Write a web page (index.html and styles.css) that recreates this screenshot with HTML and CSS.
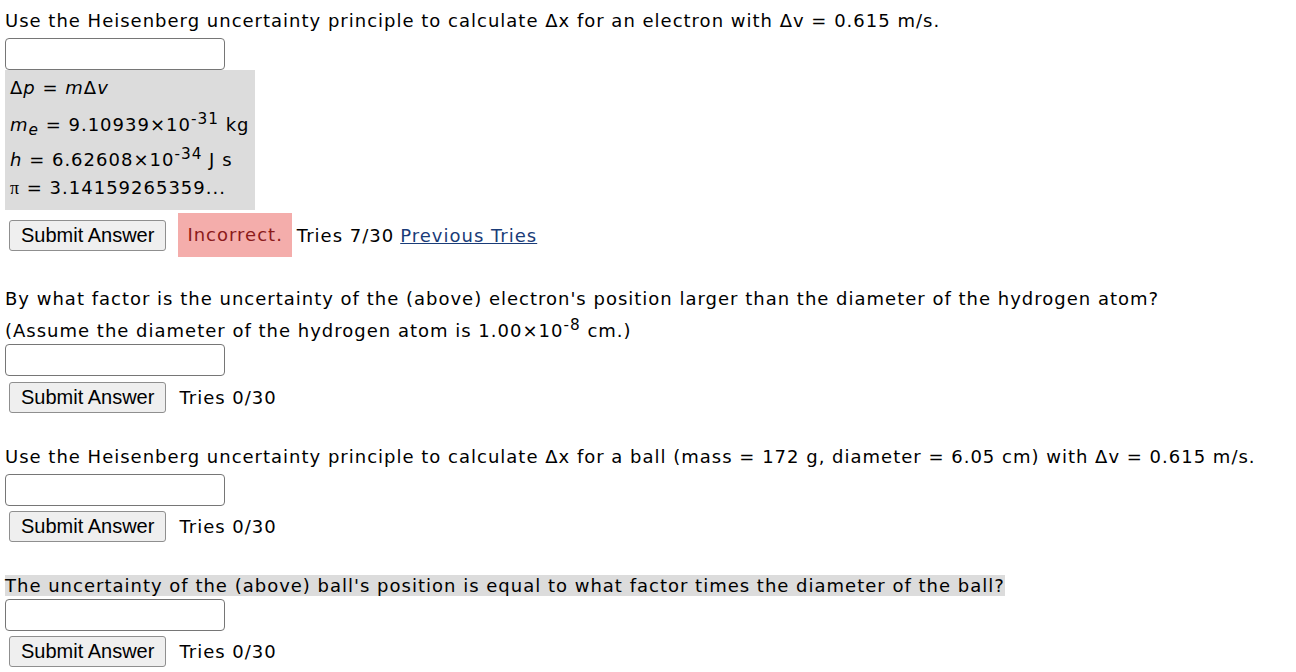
FILE: index.html
```html
<!DOCTYPE html>
<html>
<head>
<meta charset="utf-8">
<link rel="stylesheet" href="styles.css">
</head>
<body>
<div class="q q1">
  <div class="qtext">Use the Heisenberg uncertainty principle to calculate Δx for an electron with Δv = 0.615 m/s.</div>
  <input class="ans" type="text">
  <div class="hint">
    <div class="hl hl1">Δ<i>p</i> = <i>m</i>Δ<i>v</i></div>
    <div class="hl hl2"><i>m<sub>e</sub></i> = 9.10939×10<sup>-31</sup> kg</div>
    <div class="hl hl3"><i>h</i> = 6.62608×10<sup>-34</sup> J s</div>
    <div class="hl hl4"><span class="pi">π</span> = 3.14159265359...</div>
  </div>
  <div class="actions act1">
    <button class="submit">Submit Answer</button>
    <span class="bad">Incorrect.</span>
    <span class="tries">Tries 7/30</span>
    <a class="prev" href="#">Previous Tries</a>
  </div>
</div>

<div class="q q2">
  <div class="qtext">By what factor is the uncertainty of the (above) electron's position larger than the diameter of the hydrogen atom?</div>
  <div class="qtext line2">(Assume the diameter of the hydrogen atom is 1.00×10<sup>-8</sup> cm.)</div>
  <input class="ans" type="text">
  <div class="actions">
    <button class="submit">Submit Answer</button>
    <span class="tries">Tries 0/30</span>
  </div>
</div>

<div class="q q3">
  <div class="qtext">Use the Heisenberg uncertainty principle to calculate Δx for a ball (mass = 172 g, diameter = 6.05 cm) with Δv = 0.615 m/s.</div>
  <input class="ans" type="text">
  <div class="actions">
    <button class="submit">Submit Answer</button>
    <span class="tries">Tries 0/30</span>
  </div>
</div>

<div class="q q4">
  <div class="qtext"><span class="mark">The uncertainty of the (above) ball's position is equal to what factor times the diameter of the ball?</span></div>
  <input class="ans" type="text">
  <div class="actions">
    <button class="submit">Submit Answer</button>
    <span class="tries">Tries 0/30</span>
  </div>
</div>
</body>
</html>
```
FILE: styles.css
```css
html, body {
  margin: 0;
  padding: 0;
  background: #fff;
}
body {
  padding: 8px 5px 0 5px;
  font-family: "DejaVu Sans", Verdana, sans-serif;
  font-size: 18px;
  letter-spacing: 1px;
  color: #000;
}
.q {
  margin-bottom: 29px;
}
.qtext {
  line-height: 26px;
  white-space: nowrap;
}
.line2 {
  height: 32px;
  line-height: 26px;
  padding-top: 6px;
  box-sizing: border-box;
}
sup {
  font-size: 0.85em;
  line-height: 0;
  vertical-align: 0.45em;
}
sub {
  font-size: 0.85em;
  line-height: 0;
  vertical-align: -0.25em;
}
.ans {
  display: block;
  box-sizing: border-box;
  width: 220px;
  height: 32px;
  margin: 0;
  border: 1px solid #767676;
  border-radius: 4px;
  background: #fff;
  padding: 0 4px;
  font-size: 16px;
}
.q1 .ans, .q3 .ans { margin-top: 4px; }
.hint {
  display: inline-block;
  background: #dcdcdc;
  padding: 0 5px 11px 5px;
  vertical-align: top;
}
.hl { white-space: nowrap; }
.hl1 { line-height: 36px; }
.hl2 { line-height: 37px; }
.hl3 { line-height: 34px; }
.hl4 { line-height: 22px; }
.pi {
  font-family: "Liberation Serif", "Times New Roman", serif;
}
.actions {
  display: flex;
  align-items: center;
  margin-top: 6px;
  white-space: nowrap;
}
.act1 { margin-top: 3px; }
.q3 .actions, .q4 .actions { margin-top: 5px; }
.submit {
  box-sizing: border-box;
  height: 31px;
  margin: 0 0 0 4px;
  padding: 0 11px;
  font-family: "Liberation Sans", Arial, Helvetica, sans-serif;
  font-size: 20px;
  letter-spacing: 0;
  color: #000;
  background: #efefef;
  border: 1px solid #8f8f8f;
  border-radius: 3px;
}
.tries { margin-left: 13px; }
.bad {
  margin-left: 12px;
  background: #f4adab;
  color: #8b1a1a;
  padding: 0 9px;
  line-height: 44px;
}
.bad + .tries { margin-left: 5px; }
.prev {
  margin-left: 6px;
  color: #1a3c78;
  text-decoration: underline;
}
.q2 { margin-bottom: 31px; }
.q3 { margin-bottom: 31px; }
.mark {
  background: #dcdcdc;
}
```
